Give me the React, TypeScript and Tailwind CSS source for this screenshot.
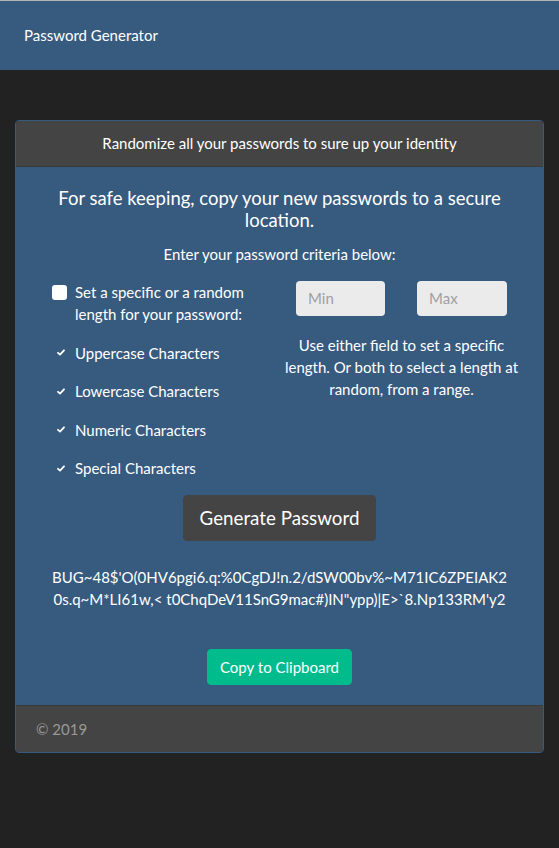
import { useState } from "react";

const criteria = [
	"Uppercase Characters",
	"Lowercase Characters",
	"Numeric Characters",
	"Special Characters",
];

const CheckMark = () => (
	<svg width="8" height="7" viewBox="0 0 8 7" className="shrink-0">
		<path d="M1 3.8 L3 5.6 L7 1.3" fill="none" stroke="white" strokeWidth="1.8" strokeLinecap="round" strokeLinejoin="round" />
	</svg>
);

export const App = (): JSX.Element => {
	const [useLength, setUseLength] = useState(false);

	return (
		<div className="min-h-[848px] bg-[#222222] font-['Lato','Open_Sans',sans-serif] text-[15px] leading-[22.5px] text-white">
			<nav className="flex h-[70px] items-center border-t border-[#b4b4b4] bg-[#375a7f] px-6">
				<span className="text-[15px]">Password Generator</span>
			</nav>

			<div className="mx-[15px] mt-[50px] overflow-hidden rounded border border-[#375a7f]">
				<div className="flex h-[46px] items-center justify-center border-b border-[#3a3a3a] bg-[#444444]">
					<span>Randomize all your passwords to sure up your identity</span>
				</div>

				<div className="flex flex-col bg-[#375a7f] px-5 pb-5 pt-[20px]">
					<h4 className="text-center text-[18.5px] leading-[22px]">
						For safe keeping, copy your new passwords to a secure location.
					</h4>
					<p className="mt-3 text-center">Enter your password criteria below:</p>

					<div className="mt-[15px] flex">
						<div className="flex w-[244px] flex-col gap-4 pl-4">
							<label className="flex items-start gap-2">
								<input
									type="checkbox"
									checked={useLength}
									onChange={() => setUseLength(!useLength)}
									className="mt-[4px] h-[15px] w-[15px] shrink-0 appearance-none rounded-[3px] bg-white"
								/>
								<span className="w-[180px]">Set a specific or a random length for your password:</span>
							</label>
							{criteria.map((c) => (
								<div key={c} className="flex items-center gap-[10px] pl-[5px]">
									<CheckMark />
									<span>{c}</span>
								</div>
							))}
						</div>

						<div className="flex flex-1 flex-col items-center">
							<div className="flex gap-[32px]">
								<input
									disabled
									placeholder="Min"
									className="h-[35px] w-[89px] rounded bg-[#ebebeb] px-3 text-[15px] placeholder:text-[#a0a0a0]"
								/>
								<input
									disabled
									placeholder="Max"
									className="h-[35px] w-[90px] rounded bg-[#ebebeb] px-3 text-[15px] placeholder:text-[#a0a0a0]"
								/>
							</div>
							<p className="mt-[18px] w-[235px] text-center leading-[22px]">
								Use either field to set a specific length. Or both to select a length at random, from a range.
							</p>
						</div>
					</div>

					<button
						type="button"
						className="mx-auto mt-[15px] rounded border border-[#444444] bg-[#444444] px-4 py-2 text-[18.75px] leading-[28px]"
					>
						Generate Password
					</button>

					<p className="mt-[25px] text-center">
						<span className="block">BUG~48$'O(0HV6pgi6.q:%0CgDJ!n.2/dSW00bv%~M71IC6ZPEIAK2</span>
						<span className="block">0s.q~M*LI61w,&lt; t0ChqDeV11SnG9mac#)IN"ypp)|E&gt;`8.Np133RM'y2</span>
					</p>

					<button
						type="button"
						className="mx-auto mt-[38px] rounded border border-[#00bc8c] bg-[#00bc8c] px-3 py-[6px]"
					>
						Copy to Clipboard
					</button>
				</div>

				<div className="flex h-[47px] items-center border-t border-[#3a3a3a] bg-[#444444] px-5 text-[#999999]">
					© 2019
				</div>
			</div>
		</div>
	);
};

export default App;
